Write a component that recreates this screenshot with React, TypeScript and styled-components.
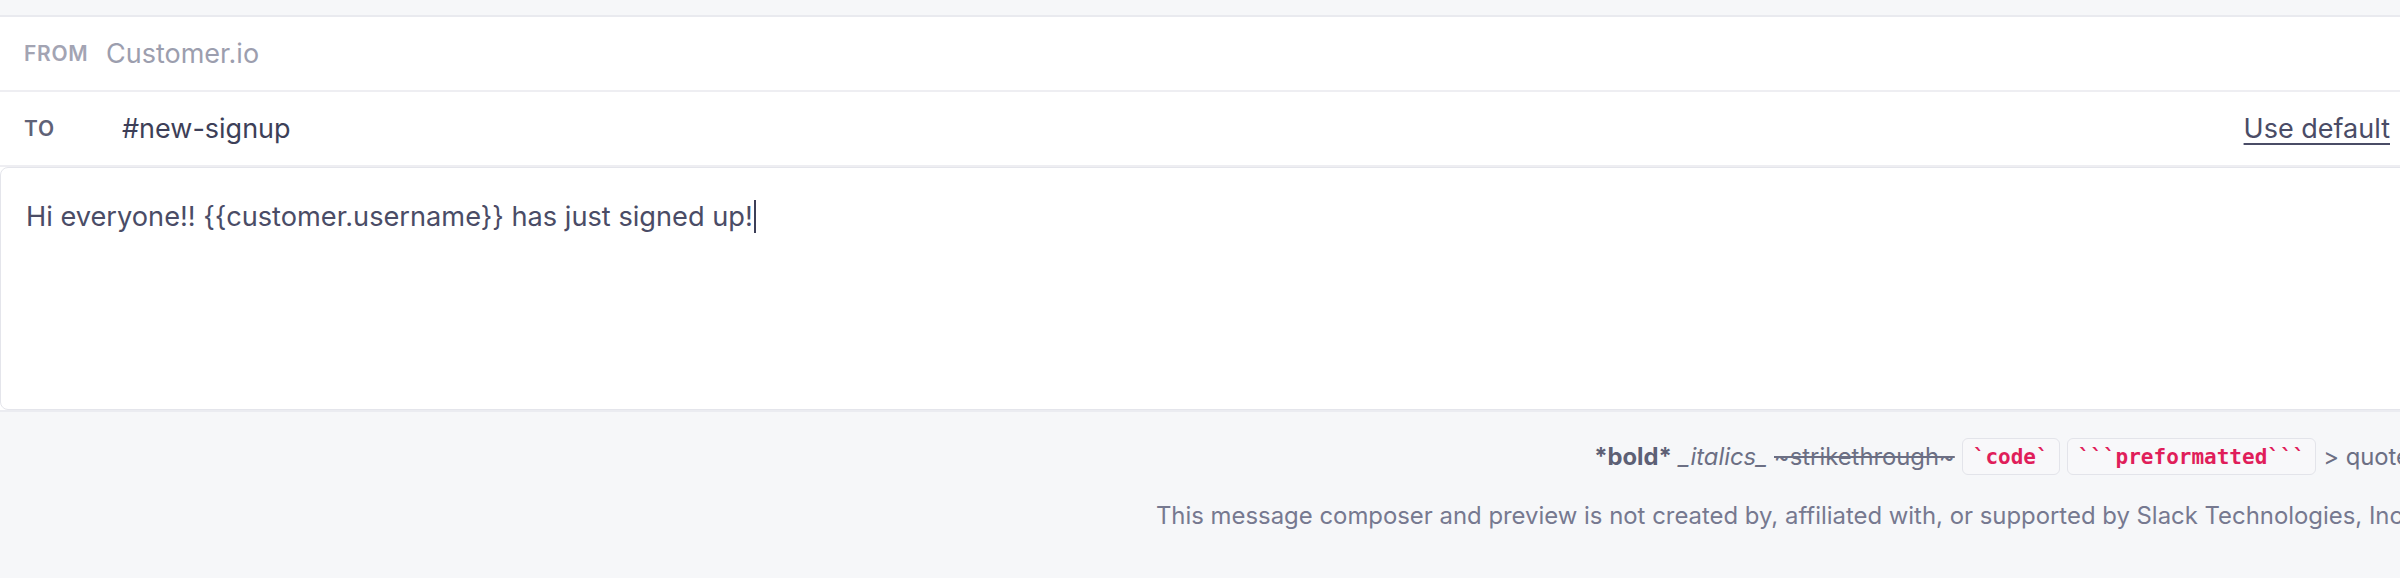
import React from "react";
import styled, { createGlobalStyle } from "styled-components";

const GlobalStyle = createGlobalStyle`
  html, body {
    margin: 0;
    padding: 0;
    background: #f6f7f9;
    overflow: hidden;
  }
  body {
    font-family: Inter, "Noto Sans", sans-serif;
    -webkit-font-smoothing: antialiased;
  }
`;

const Page = styled.div`
  width: 2414px;
  background: #f6f7f9;
`;

const TopStrip = styled.div`
  height: 15px;
  border-bottom: 2px solid #e9eaef;
`;

const Card = styled.div`
  background: #ffffff;
  border-bottom: 2px solid #ebecf1;
`;

const FieldRow = styled.div`
  display: flex;
  align-items: center;
  height: 73px;
  padding: 0 24px;
  border-bottom: 2px solid #eeeef2;
`;

const Label = styled.span<{ $width: number; $muted?: boolean }>`
  flex: 0 0 ${(p) => p.$width}px;
  font-size: 21px;
  font-weight: 600;
  letter-spacing: 0.7px;
  text-transform: uppercase;
  color: ${(p) => (p.$muted ? "#a3a4b3" : "#5f6277")};
`;

const Value = styled.span<{ $muted?: boolean }>`
  flex: 1;
  font-size: 27px;
  color: ${(p) => (p.$muted ? "#9c9eae" : "#3d3f58")};
`;

const LinkButton = styled.span`
  font-size: 27px;
  color: #4a4c66;
  text-decoration: underline;
  text-underline-offset: 5px;
  text-decoration-thickness: 2px;
  cursor: pointer;
`;

const Editor = styled.div`
  box-sizing: border-box;
  height: 243px;
  padding: 29px 25px;
  border: 1px solid #e4e5eb;
  border-radius: 8px;
  font-size: 27.2px;
  line-height: 40px;
  color: #4a4c66;
`;

const Caret = styled.span`
  display: inline-block;
  width: 2px;
  height: 33px;
  margin-left: 1px;
  vertical-align: -7px;
  background: #3d3f58;
`;

const Footer = styled.div`
  display: flex;
  flex-direction: column;
  align-items: flex-end;
  gap: 26px;
  padding: 26px 4px 0 0;
`;

const Hints = styled.div`
  display: flex;
  align-items: center;
  gap: 7px;
  font-size: 23.8px;
  color: #6c6f84;
  white-space: nowrap;
`;

const Bold = styled.span`
  font-weight: 700;
  color: #5d6075;
`;

const Italic = styled.span`
  font-style: italic;
`;

const Strike = styled.span`
  text-decoration: line-through;
  text-decoration-thickness: 2px;
`;

const CodeChip = styled.span`
  display: inline-flex;
  align-items: center;
  height: 35px;
  padding: 0 10px;
  border: 1px solid #e3e4ea;
  border-radius: 6px;
  background: #f8f8fa;
  font-family: "DejaVu Sans Mono", "Liberation Mono", monospace;
  font-size: 21px;
  font-weight: 700;
  color: #e01e5a;
`;

const Disclaimer = styled.div`
  font-size: 23.9px;
  line-height: 30px;
  color: #767990;
  white-space: nowrap;
`;

export default function App() {
  return (
    <>
      <GlobalStyle />
      <Page>
        <TopStrip />
        <Card>
          <FieldRow>
            <Label $width={82} $muted>
              From
            </Label>
            <Value $muted>Customer.io</Value>
          </FieldRow>
          <FieldRow>
            <Label $width={98}>To</Label>
            <Value>#new-signup</Value>
            <LinkButton>Use default</LinkButton>
          </FieldRow>
          <Editor>
            Hi everyone!! {"{{customer.username}}"} has just signed up!
            <Caret />
          </Editor>
        </Card>
        <Footer>
          <Hints>
            <Bold>*bold*</Bold>
            <Italic>_italics_</Italic>
            <Strike>~strikethrough~</Strike>
            <CodeChip>`code`</CodeChip>
            <CodeChip>```preformatted```</CodeChip>
            <span>&gt; quote</span>
          </Hints>
          <Disclaimer>
            This message composer and preview is not created by, affiliated with, or supported by Slack Technologies, Inc.
          </Disclaimer>
        </Footer>
      </Page>
    </>
  );
}
